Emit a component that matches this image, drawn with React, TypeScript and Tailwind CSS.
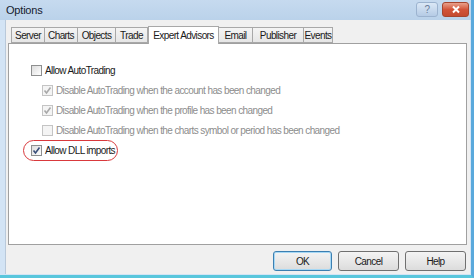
import React from "react";

const font = { fontFamily: '"Liberation Sans", Arial, sans-serif', letterSpacing: "-0.6px" };

function Check({ checked, disabled }: { checked?: boolean; disabled?: boolean }) {
  return (
    <div
      className={`w-[11px] h-[11px] border flex items-center justify-center shrink-0 ${
        disabled ? "border-[#c4c4c4] bg-[#f4f4f4]" : "border-[#8e8f8f] bg-gradient-to-br from-[#dcdcdc] to-[#ffffff]"
      }`}
    >
      {checked && (
        <svg width="9" height="9" viewBox="0 0 9 9">
          <path
            d="M1.5 4.5 L3.5 7 L7.5 1.5"
            fill="none"
            stroke={disabled ? "#a8a8a8" : "#3a4f7a"}
            strokeWidth="1.6"
          />
        </svg>
      )}
    </div>
  );
}

function Row({
  label,
  checked,
  disabled,
  indent,
}: {
  label: string;
  checked?: boolean;
  disabled?: boolean;
  indent?: boolean;
}) {
  return (
    <div className={`flex items-center gap-[3px] h-[20px] ${indent ? "pl-[11px]" : ""}`}>
      <Check checked={checked} disabled={disabled} />
      <span className={disabled ? "text-[#8d8d8d]" : "text-[#1a1a1a]"}>{label}</span>
    </div>
  );
}

const tabs = ["Server", "Charts", "Objects", "Trade", "Expert Advisors", "Email", "Publisher", "Events"];
const tabW = [34, 34, 39, 33, 71, 35, 52, 30];

export default function App() {
  return (
    <div
      className="w-[474px] h-[278px] bg-[#d3e4f5] flex flex-col overflow-hidden text-[10px] border-r-[3px] border-b-[3px] border-r-[#5aa9dc] border-b-[#58c6dc]"
      style={font}
    >
      {/* title bar */}
      <div className="h-[20px] flex items-center bg-gradient-to-b from-[#c6daef] to-[#bad2ea] shrink-0">
        <span className="pl-[6px] text-[11px] text-[#15202e] flex-1 tracking-[-0.2px]">Options</span>
        <div className="flex items-start h-full pt-[2px] pr-[2px] gap-[4px]">
          <div className="w-[22px] h-[15px] rounded-[3px] border border-[#9cb3cf] bg-gradient-to-b from-[#dbe8f6] to-[#b5cbe5] flex items-center justify-center text-[10px] text-[#6a7c98]">
            ?
          </div>
          <div className="w-[27px] h-[15px] rounded-[3px] border border-[#a6452f] bg-gradient-to-b from-[#e8a08c] via-[#d2543a] to-[#c44a30] flex items-center justify-center">
            <svg width="10" height="9" viewBox="0 0 10 9">
              <path d="M2 1.5 L8 7.5 M8 1.5 L2 7.5" stroke="#ffffff" strokeWidth="2" />
            </svg>
          </div>
        </div>
      </div>
      {/* body */}
      <div className="flex-1 flex pl-[5px] pr-[1px] pb-[1px]">
        <div className="flex-1 bg-[#f0f0f0] border-l border-[#b9c9da] flex flex-col pl-[2px] pr-[3px] pt-[6px]">
          {/* tabs */}
          <div className="flex items-end h-[17px] pl-[3px]">
            {tabs.map((t, i) => {
              const sel = t === "Expert Advisors";
              return (
                <div
                  key={t}
                  style={{ width: tabW[i] }}
                  className={`flex items-center justify-center border border-[#a8a8a8] ${
                    sel
                      ? "h-[18px] bg-white border-b-0 relative z-10 -mb-px"
                      : "h-[16px] bg-gradient-to-b from-[#f4f4f4] to-[#e6e6e6] -ml-px first:ml-0"
                  } ${i === 5 ? "-ml-px" : ""}`}
                >
                  <span className="text-[#1a1a1a] whitespace-nowrap">{t}</span>
                </div>
              );
            })}
          </div>
          {/* panel */}
          <div className="h-[202px] bg-white border border-[#a0a0a0] pl-[22px] pt-[16px] flex flex-col">
            <Row label="Allow AutoTrading" />
            <Row label="Disable AutoTrading when the account has been changed" checked disabled indent />
            <Row label="Disable AutoTrading when the profile has been changed" checked disabled indent />
            <Row label="Disable AutoTrading when the charts symbol or period has been changed" disabled indent />
            <div className="relative self-start">
              <Row label="Allow DLL imports" checked />
              <div className="absolute left-[-8px] top-[0px] w-[95px] h-[21px] rounded-[11px] border-[1.5px] border-[#d9393c]" />
            </div>
          </div>
          {/* buttons */}
          <div className="flex justify-end gap-[6px] pt-[6px] pr-[1px]">
            {[
              ["OK", true, 59],
              ["Cancel", false, 61],
              ["Help", false, 61],
            ].map(([l, d, w]) => (
              <div
                key={l as string}
                style={{ width: w as number }}
                className={`h-[20px] rounded-[3px] border flex items-center justify-center bg-gradient-to-b from-[#f4f4f4] to-[#dcdcdc] text-[#1a1a1a] ${
                  d ? "border-[#3c7fb1] shadow-[inset_0_0_0_1px_#a6d8f5]" : "border-[#707070]"
                }`}
              >
                {l as string}
              </div>
            ))}
          </div>
        </div>
      </div>
    </div>
  );
}
